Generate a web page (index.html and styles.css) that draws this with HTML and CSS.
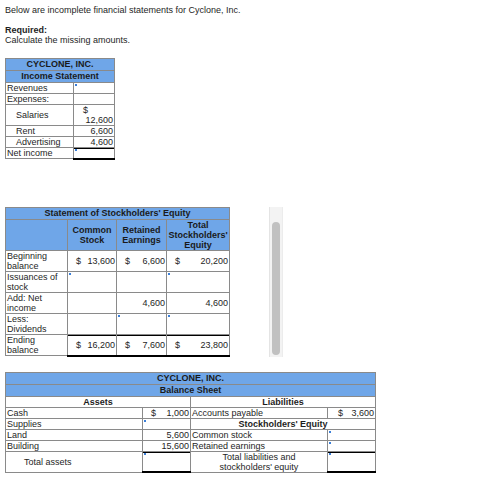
FILE: index.html
```html
<!DOCTYPE html>
<html>
<head>
<meta charset="utf-8">
<link rel="stylesheet" href="styles.css">
</head>
<body>
<p class="intro">Below are incomplete financial statements for Cyclone, Inc.</p>
<p class="req"><b>Required:</b><br>Calculate the missing amounts.</p>

<table class="fs is">
  <colgroup><col class="is-lab"><col class="is-val"></colgroup>
  <tr><th colspan="2" class="hd">CYCLONE, INC.</th></tr>
  <tr><th colspan="2" class="hd">Income Statement</th></tr>
  <tr><td>Revenues</td><td class="in"></td></tr>
  <tr><td>Expenses:</td><td></td></tr>
  <tr><td class="ind">Salaries</td><td><div class="dol">$</div><div class="r">12,600</div></td></tr>
  <tr><td class="ind">Rent</td><td class="r">6,600</td></tr>
  <tr><td class="ind">Advertising</td><td class="r">4,600</td></tr>
  <tr><td>Net income</td><td class="in tot"></td></tr>
</table>

<div class="se-wrap">
  <table class="fs se">
    <colgroup><col class="se-lab"><col class="se-c1"><col class="se-c2"><col class="se-c3"></colgroup>
    <tr><th colspan="4" class="hd">Statement of Stockholders' Equity</th></tr>
    <tr class="hd"><th></th><th>Common<br>Stock</th><th>Retained<br>Earnings</th><th>Total<br>Stockholders'<br>Equity</th></tr>
    <tr><td>Beginning balance</td>
      <td><div class="amt"><span>$</span><span>13,600</span></div></td>
      <td><div class="amt"><span>$</span><span>6,600</span></div></td>
      <td><div class="amt"><span>$</span><span>20,200</span></div></td></tr>
    <tr><td>Issuances of stock</td><td class="in"></td><td></td><td class="in"></td></tr>
    <tr><td>Add: Net income</td><td></td><td class="r">4,600</td><td class="r">4,600</td></tr>
    <tr><td>Less: Dividends</td><td></td><td class="in"></td><td class="in"></td></tr>
    <tr class="end"><td>Ending balance</td>
      <td class="tot"><div class="amt"><span>$</span><span>16,200</span></div></td>
      <td class="tot"><div class="amt"><span>$</span><span>7,600</span></div></td>
      <td class="tot"><div class="amt"><span>$</span><span>23,800</span></div></td></tr>
  </table>
  <div class="sbar"><div class="thumb"></div></div>
</div>

<table class="fs bs">
  <colgroup><col class="bs-lab"><col class="bs-val"><col class="bs-lab"><col class="bs-val"></colgroup>
  <tr><th colspan="4" class="hd">CYCLONE, INC.</th></tr>
  <tr><th colspan="4" class="hd">Balance Sheet</th></tr>
  <tr><th colspan="2">Assets</th><th colspan="2">Liabilities</th></tr>
  <tr><td>Cash</td><td><div class="amt"><span>$</span><span>1,000</span></div></td>
      <td>Accounts payable</td><td><div class="amt wide"><span>$</span><span>3,600</span></div></td></tr>
  <tr><td>Supplies</td><td class="in"></td><th colspan="2">Stockholders' Equity</th></tr>
  <tr><td>Land</td><td class="r">5,600</td><td>Common stock</td><td class="in"></td></tr>
  <tr><td>Building</td><td class="r">15,600</td><td>Retained earnings</td><td class="in"></td></tr>
  <tr><td class="ind2">Total assets</td><td class="in tot"></td>
      <td class="c">Total liabilities and<br>stockholders' equity</td><td class="in tot"></td></tr>
</table>
</body>
</html>
```

FILE: styles.css
```css
body {
  margin: 0;
  padding: 5px;
  font-family: "Liberation Sans", Arial, sans-serif;
  font-size: 9px;
  line-height: 10px;
  color: #1e1e1e;
  background: #fff;
}

.intro { margin: 0 0 10px; }
.req { margin: 0; }

.fs {
  border-collapse: collapse;
  table-layout: fixed;
  font-size: 9px;
  line-height: 10px;
}
.fs td, .fs th {
  border: 1px solid #8a8a8a;
  padding: 0 1px;
  vertical-align: middle;
  text-align: left;
}
.fs th { font-weight: bold; text-align: center; }
.fs .hd th, .fs th.hd {
  background: #6fa6e8;
  color: #1a1a1a;
}
.fs th.hd { line-height: 11px; }

.is { margin-top: 13px; width: 109px; }
.is-lab { width: 68px; }
.is-val { width: 41px; }

.ind { padding-left: 10px !important; }
.ind2 { padding-left: 18px !important; }
.r { text-align: right !important; }
.c { text-align: center !important; }
.dol { padding-left: 8px; }

.in {
  background: linear-gradient(#3b7fd8, #3b7fd8) no-repeat 1px 1px / 2px 2px;
}
.tot {
  border-bottom: 2px solid #000 !important;
  box-shadow: inset 0 1px 0 #000;
}

.amt {
  display: flex;
  justify-content: space-between;
  padding-left: 7px;
}
.amt.wide { padding-left: 9px; }

.se-wrap {
  margin-top: 47px;
  display: flex;
  align-items: flex-start;
}
.se { width: 224px; }
.se-lab { width: 62px; }
.se-c1 { width: 49px; }
.se-c2 { width: 50px; }
.se-c3 { width: 63px; }
.se td { height: 20px; }

.sbar {
  margin-left: 39px;
  width: 14px;
  height: 150px;
  background: #f3f3f3;
  border-left: 1px solid #e4e4e4;
  border-right: 1px solid #ececec;
  display: flex;
  flex-direction: column;
  align-items: center;
  justify-content: flex-end;
  padding-bottom: 2px;
  box-sizing: border-box;
}
.thumb {
  width: 8px;
  height: 133px;
  border-radius: 4px;
  background: #c1c1c1;
}

.bs { margin-top: 15px; width: 369px; }
.bs-lab { width: 137px; }
.bs-val { width: 48px; }
```
